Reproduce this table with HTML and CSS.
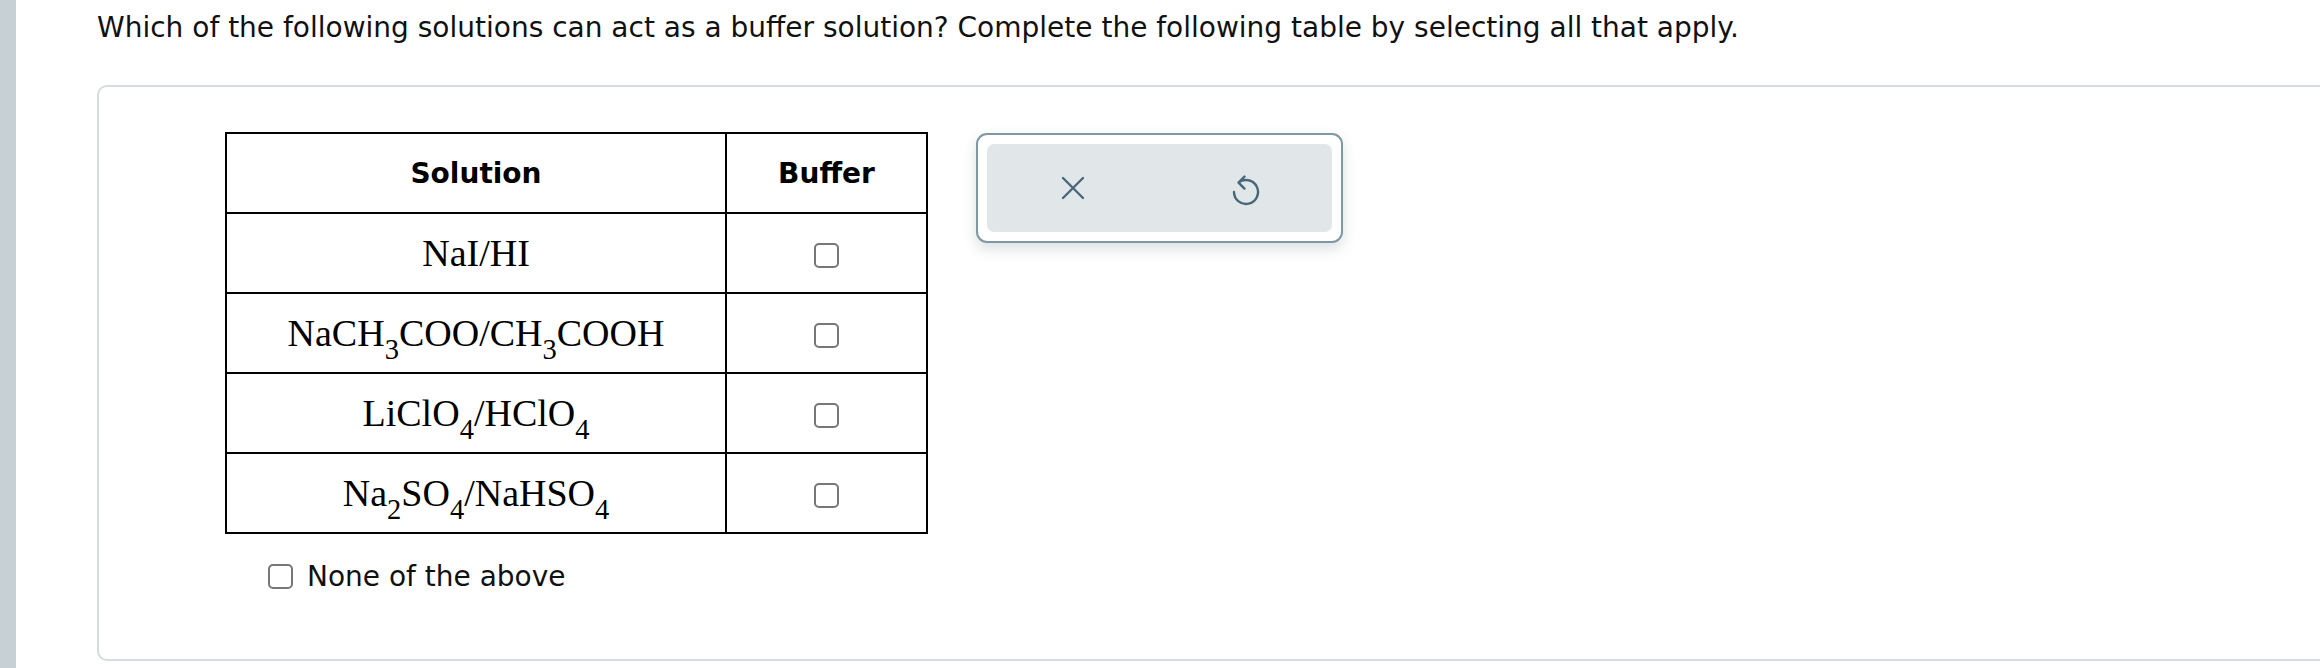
FILE: index.html
```html
<!DOCTYPE html>
<html lang="en">
<head>
<meta charset="utf-8">
<title>Buffer solutions</title>
<link rel="stylesheet" href="styles.css">
</head>
<body>
<div class="page">
  <div class="sidebar"></div>
  <main class="main">
    <p class="question">Which of the following solutions can act as a buffer solution? Complete the following table by selecting all that apply.</p>
    <section class="card">
      <div class="work">
        <div class="grid-table" role="table">
          <div class="cell head" role="columnheader">Solution</div>
          <div class="cell head" role="columnheader">Buffer</div>

          <div class="cell chem"><span class="formula">NaI/HI</span></div>
          <div class="cell check"><span class="box"></span></div>

          <div class="cell chem"><span class="formula">NaCH<sub>3</sub>COO/CH<sub>3</sub>COOH</span></div>
          <div class="cell check"><span class="box"></span></div>

          <div class="cell chem"><span class="formula">LiClO<sub>4</sub>/HClO<sub>4</sub></span></div>
          <div class="cell check"><span class="box"></span></div>

          <div class="cell chem"><span class="formula">Na<sub>2</sub>SO<sub>4</sub>/NaHSO<sub>4</sub></span></div>
          <div class="cell check"><span class="box"></span></div>
        </div>

        <div class="tools">
          <div class="tools-inner">
            <button class="tool" aria-label="Clear">
              <svg width="24" height="24" viewBox="0 0 24 24"><path d="M2 2 L22 22 M22 2 L2 22" fill="none" stroke="#48687a" stroke-width="2.4" stroke-linecap="round"/></svg>
            </button>
            <button class="tool" aria-label="Undo">
              <svg width="30" height="40" viewBox="0 0 30 40"><path d="M7.5 14.6 A12 12 0 1 1 3 24 M13.5 8.6 L7.5 14.6 L13.5 20.6" fill="none" stroke="#48687a" stroke-width="2.4" stroke-linecap="round" stroke-linejoin="round"/></svg>
            </button>
          </div>
        </div>
      </div>

      <label class="none">
        <span class="box"></span>
        <span>None of the above</span>
      </label>
    </section>
  </main>
</div>
</body>
</html>
```

FILE: styles.css
```css
html, body {
  margin: 0;
  padding: 0;
  background: #ffffff;
  overflow: hidden;
}

.page {
  display: flex;
  width: 2320px;
  height: 668px;
  overflow: hidden;
}

.sidebar {
  flex: 0 0 16px;
  background: #c6d0d5;
}

.main {
  flex: 1 1 auto;
  padding-left: 81px;
  min-width: 0;
}

.question {
  margin: 0;
  padding-top: 11px;
  font-family: Verdana, "DejaVu Sans", sans-serif;
  font-size: 28px;
  line-height: 33px;
  color: #111;
  white-space: nowrap;
}

.card {
  margin-top: 41px;
  width: 2400px;
  height: 576px;
  box-sizing: border-box;
  border: 2px solid #d6dbdf;
  border-radius: 10px;
  padding: 45px 0 0 126px;
}

.work {
  display: flex;
  align-items: flex-start;
  gap: 48px;
}

.grid-table {
  display: grid;
  grid-template-columns: 500px 201px;
  grid-auto-rows: 80px;
  border-top: 2px solid #000;
  border-left: 2px solid #000;
}

.cell {
  box-sizing: border-box;
  border-right: 2px solid #000;
  border-bottom: 2px solid #000;
  display: flex;
  align-items: center;
  justify-content: center;
}

.head {
  font-family: Verdana, "DejaVu Sans", sans-serif;
  font-weight: bold;
  font-size: 28px;
  color: #000;
}

.chem {
  font-family: "Times New Roman", "Liberation Serif", serif;
  font-size: 38px;
  line-height: 1;
  color: #000;
  white-space: nowrap;
}

.formula {
  display: inline-block;
}

.formula sub {
  font-size: 0.75em;
  line-height: 0;
  vertical-align: -0.45em;
}

.check .box {
  margin-top: 4px;
}

.box {
  display: inline-block;
  box-sizing: border-box;
  width: 25px;
  height: 25px;
  border: 2px solid #777777;
  border-radius: 5px;
  background: #fff;
}

.tools {
  margin-top: 1px;
  box-sizing: border-box;
  width: 367px;
  height: 110px;
  padding: 9px;
  border: 2px solid #7f98a3;
  border-radius: 11px;
  background: #fff;
  box-shadow: 0 6px 14px rgba(40, 60, 70, 0.16);
}

.tools-inner {
  display: flex;
  height: 100%;
  background: #e1e6e9;
  border-radius: 7px;
}

.tool {
  flex: 1 1 0;
  display: flex;
  align-items: center;
  justify-content: center;
  border: 0;
  padding: 0;
  margin: 0;
  background: transparent;
}

.none {
  display: flex;
  align-items: center;
  gap: 14px;
  margin: 26px 0 0 43px;
  font-family: Verdana, "DejaVu Sans", sans-serif;
  font-size: 28px;
  color: #111;
}
```
